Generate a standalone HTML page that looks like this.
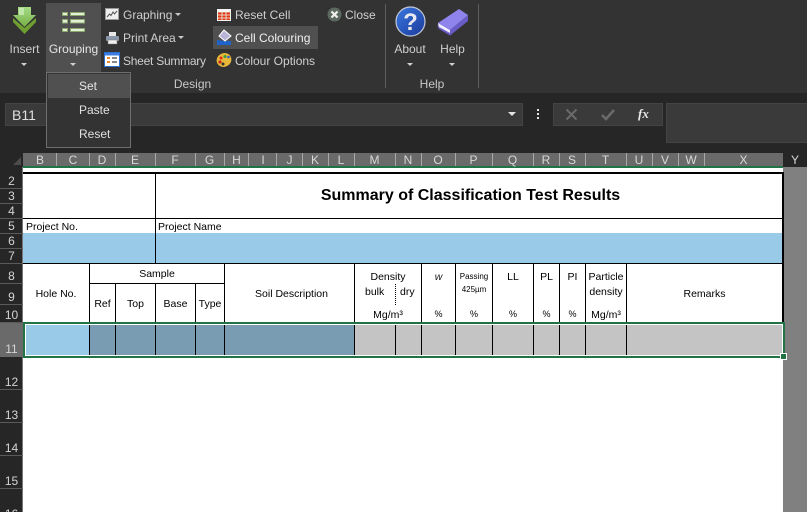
<!DOCTYPE html>
<html><head><meta charset="utf-8">
<style>
html,body{margin:0;padding:0;background:#262626;}
#p{position:relative;width:807px;height:512px;overflow:hidden;background:#262626;font-family:"Liberation Sans",sans-serif;}
#p div,#p svg{position:absolute;}
.t{color:#cfcfcf;font-size:12px;line-height:14px;white-space:nowrap;}
.c{text-align:center;}
.h{color:#d8d8d8;font-size:12px;line-height:14px;text-align:center;top:153px;height:13px;}
.hb{top:153px;height:13px;width:1px;background:#a8a8a8;}
.rn{color:#d4d4d4;font-size:12px;line-height:14px;width:23px;text-align:center;left:0;}
.rl{left:0;width:23px;height:1px;background:#5a5a5a;}
.k{background:#000;}
.x{color:#000;font-size:10.5px;line-height:12px;white-space:nowrap;text-align:center;}
.arr{width:0;height:0;border-left:3px solid transparent;border-right:3px solid transparent;border-top:3px solid #d0d0d0;}
</style></head><body><div id="p">
<!-- ribbon -->
<div style="left:0;top:0;width:807px;height:93px;background:#333"></div>
<div style="left:46px;top:3px;width:55px;height:70px;background:#505050"></div>
<div style="left:213px;top:26px;width:105px;height:23px;background:#505050"></div>
<div style="left:385px;top:4px;width:1px;height:84px;background:#5e5e5e"></div>
<div style="left:478px;top:4px;width:1px;height:84px;background:#5e5e5e"></div>

<!-- Insert icon -->
<svg style="left:13px;top:7px" width="23" height="28" viewBox="0 0 23 28">
<defs><linearGradient id="g1" x1="0" y1="0" x2="0" y2="1"><stop offset="0" stop-color="#a6dc88"/><stop offset="1" stop-color="#76b044"/></linearGradient></defs>
<path d="M0 11L11.500 21L23 11V15L11.500 27L0 15Z" fill="#6f9f30"/>
<path d="M5 0H18V8H23L11.500 20L0 8H5Z" fill="url(#g1)"/>
<path d="M6 1H11V8H6Z" fill="#cdeebc" opacity=".75"/>
</svg>
<div class="t c" style="left:0;top:42px;width:49px">Insert</div>
<div class="arr" style="left:21px;top:63px"></div>

<!-- Grouping icon -->
<svg style="left:61px;top:11px" width="25" height="22" viewBox="0 0 25 22" fill="#e4f0d6" stroke="#8aa86e" stroke-width="1">
<rect x="1.500" y="1.500" width="5" height="3"/><rect x="9.500" y="1.500" width="14" height="3"/>
<rect x="1.500" y="8.500" width="5" height="3.500"/><rect x="9.500" y="8.500" width="14" height="3.500"/>
<rect x="1.500" y="17.500" width="5" height="3"/><rect x="9.500" y="17.500" width="14" height="3"/>
</svg>
<div class="t c" style="left:46px;top:42px;width:55px;color:#e6e6e6">Grouping</div>
<div class="arr" style="left:70px;top:63px"></div>

<!-- Column 2 -->
<svg style="left:105px;top:8px" width="14" height="12" viewBox="0 0 14 12"><rect x=".5" y=".5" width="13" height="11" fill="#eee" stroke="#999"/><path d="M2 9L4.500 6L6 7.500L8 4L9.500 6L12 3" fill="none" stroke="#555" stroke-width="1"/></svg>
<div class="t" style="left:123px;top:8px">Graphing</div>
<div class="arr" style="left:175px;top:13px;border-top-color:#c8c8c8"></div>
<svg style="left:105px;top:31px" width="15" height="14" viewBox="0 0 15 14"><rect x="4" y="1" width="7" height="4" fill="#e8e8e8"/><rect x="1" y="5" width="13" height="5" rx="1" fill="#8a97a8"/><rect x="3" y="9" width="9" height="4" fill="#f0f0f0" stroke="#777" stroke-width=".5"/></svg>
<div class="t" style="left:123px;top:31px">Print Area</div>
<div class="arr" style="left:178px;top:36px;border-top-color:#c8c8c8"></div>
<svg style="left:104px;top:52px" width="16" height="15" viewBox="0 0 16 15"><rect x=".5" y=".5" width="15" height="14" fill="#fff" stroke="#2a6fd0"/><rect x="1" y="1" width="14" height="2.500" fill="#3a7fe0"/><rect x="3" y="5" width="3" height="2" fill="#e88a2a"/><rect x="8" y="5" width="5" height="2" fill="#888"/><rect x="3" y="9" width="3" height="2" fill="#e88a2a"/><rect x="8" y="9" width="5" height="2" fill="#888"/></svg>
<div class="t" style="left:123px;top:54px;letter-spacing:-.25px">Sheet Summary</div>

<!-- Column 3 -->
<svg style="left:217px;top:9px" width="14" height="12" viewBox="0 0 14 12"><rect x="0" y="0" width="14" height="12" fill="#f4f4f4"/><rect x="1" y="3" width="12" height="8" fill="#d93a10"/><path d="M5 0V12M9 0V12M0 3H14M0 6H14M0 9H14" stroke="#f4f4f4" stroke-width=".8"/></svg>
<div class="t" style="left:235px;top:8px">Reset Cell</div>
<svg style="left:216px;top:28px" width="17" height="18" viewBox="0 0 17 18"><path d="M1 12V17H15V13H8Z" fill="#1f62c8"/><path d="M8 2L15 8L9 13L3 8Z" fill="#b8b4d8" stroke="#fff"/></svg>
<div class="t" style="left:235px;top:31px;color:#f0f0f0">Cell Colouring</div>
<svg style="left:216px;top:52px" width="16" height="16" viewBox="0 0 16 16"><ellipse cx="8" cy="8" rx="7.500" ry="6.800" fill="#e8b838" transform="rotate(-25 8 8)"/><circle cx="5" cy="6" r="1.500" fill="#d93020"/><circle cx="9" cy="4.500" r="1.500" fill="#3a9a40"/><circle cx="12.500" cy="5" r="1.300" fill="#2a60d0"/><circle cx="4" cy="10" r="1.500" fill="#c02020"/><circle cx="7" cy="12" r="1.500" fill="#333"/></svg>
<div class="t" style="left:235px;top:54px">Colour Options</div>

<!-- Close -->
<svg style="left:327px;top:7px" width="15" height="15" viewBox="0 0 15 15"><circle cx="7.500" cy="7.500" r="7" fill="#5c6860"/><path d="M4.500 4.500L10.500 10.500M10.500 4.500L4.500 10.500" stroke="#f0f0f0" stroke-width="2.200"/></svg>
<div class="t" style="left:345px;top:8px">Close</div>

<!-- About -->
<svg style="left:395px;top:6px" width="31" height="31" viewBox="0 0 31 31"><defs><linearGradient id="g2" x1="0" y1="0" x2="1" y2="1"><stop offset="0" stop-color="#3a78e0"/><stop offset="1" stop-color="#1a3a9a"/></linearGradient></defs><circle cx="15.500" cy="15.500" r="14.500" fill="url(#g2)" stroke="#c4cad8" stroke-width="1.200"/><text x="15.500" y="24" font-family="Liberation Sans" font-weight="700" font-size="24" fill="#e8e8f0" text-anchor="middle">?</text></svg>
<div class="t c" style="left:386px;top:42px;width:48px">About</div>
<div class="arr" style="left:407px;top:63px"></div>

<!-- Help book -->
<svg style="left:437px;top:7px" width="32" height="29" viewBox="0 0 32 29"><path d="M1 16Q0 20 2 22L13 28.500L31 14V8L13 23Z" fill="#6a5cc8"/><path d="M1 16L13 23V26L2 20Z" fill="#f2f0ff"/><path d="M1 16L22 2L31 8L13 23Z" fill="#8f84ec"/></svg>
<div class="t c" style="left:430px;top:42px;width:45px">Help</div>
<div class="arr" style="left:449px;top:63px"></div>

<div class="t c" style="left:150px;top:77px;width:85px;color:#c8c8c8">Design</div>
<div class="t c" style="left:410px;top:77px;width:44px;color:#c8c8c8">Help</div>

<!-- formula bar -->
<div style="left:5px;top:103px;width:518px;height:23px;background:#3a3a3a;border:1px solid #444;box-sizing:border-box"></div>
<div style="left:12px;top:107px;color:#e0e0e0;font-size:14px;line-height:16px">B11</div>
<div style="left:508px;top:112px;width:0;height:0;border-left:4px solid transparent;border-right:4px solid transparent;border-top:4px solid #e4e4e4"></div>
<div style="left:537px;top:109px;width:2px;height:2px;background:#e4e4e4;box-shadow:0 4px 0 #e4e4e4,0 8px 0 #e4e4e4"></div>
<div style="left:553px;top:103px;width:110px;height:23px;background:#3a3a3a;border:1px solid #444;box-sizing:border-box"></div>
<svg style="left:565px;top:108px" width="13" height="13" viewBox="0 0 13 13"><path d="M1.500 1.500L11.500 11.500M11.500 1.500L1.500 11.500" stroke="#6a6a6a" stroke-width="2"/></svg>
<svg style="left:601px;top:108px" width="14" height="13" viewBox="0 0 14 13"><path d="M1 7L5 11L13 2" fill="none" stroke="#6a6a6a" stroke-width="2.500"/></svg>
<div style="left:638px;top:106px;color:#e8e8e8;font-family:'Liberation Serif',serif;font-style:italic;font-weight:700;font-size:13px;line-height:15px">fx</div>
<div style="left:666px;top:103px;width:141px;height:40px;background:#3a3a3a;border:1px solid #444;box-sizing:border-box;border-right:0"></div>

<!-- Dropdown -->
<div style="left:46px;top:72px;width:85px;height:76px;background:#333;border:1px solid #6e6e6e;box-sizing:border-box"></div>
<div style="left:48px;top:74px;width:82px;height:24px;background:#505050"></div>
<div class="t" style="left:79px;top:79px;color:#e6e6e6">Set</div>
<div class="t" style="left:79px;top:103px;color:#e0e0e0">Paste</div>
<div class="t" style="left:79px;top:127px;color:#e0e0e0">Reset</div>

<!-- sheet -->
<div style="left:23px;top:167px;width:761px;height:345px;background:#fff"></div>
<div style="left:783px;top:167px;width:24px;height:345px;background:#808080"></div>
<div style="left:0;top:153px;width:23px;height:359px;background:#262626"></div>
<div style="left:22px;top:167px;width:1px;height:345px;background:#777"></div>
<div style="left:13px;top:157px;width:0;height:0;border-left:8px solid transparent;border-bottom:8px solid #4c4c4c"></div>

<!-- col header -->
<div style="left:23px;top:153px;width:760px;height:13px;background:#6a6a6a"></div>
<div style="left:23px;top:166px;width:760px;height:2px;background:#217346"></div>
<div class="h" style="left:23px;width:34px">B</div><div class="h" style="left:57px;width:32px">C</div><div class="h" style="left:89px;width:26px">D</div><div class="h" style="left:115px;width:40px">E</div><div class="h" style="left:155px;width:40px">F</div><div class="h" style="left:195px;width:29px">G</div><div class="h" style="left:224px;width:25px">H</div><div class="h" style="left:249px;width:28px">I</div><div class="h" style="left:277px;width:25px">J</div><div class="h" style="left:302px;width:26px">K</div><div class="h" style="left:328px;width:26px">L</div><div class="h" style="left:354px;width:41px">M</div><div class="h" style="left:395px;width:26px">N</div><div class="h" style="left:421px;width:34px">O</div><div class="h" style="left:455px;width:37px">P</div><div class="h" style="left:492px;width:41px">Q</div><div class="h" style="left:533px;width:26px">R</div><div class="h" style="left:559px;width:26px">S</div><div class="h" style="left:585px;width:41px">T</div><div class="h" style="left:626px;width:26px">U</div><div class="h" style="left:652px;width:26px">V</div><div class="h" style="left:678px;width:26px">W</div><div class="h" style="left:704px;width:79px">X</div><div class="h" style="left:783px;width:24px">Y</div>
<div class="hb" style="left:56px"></div><div class="hb" style="left:89px"></div><div class="hb" style="left:115px"></div><div class="hb" style="left:155px"></div><div class="hb" style="left:195px"></div><div class="hb" style="left:224px"></div><div class="hb" style="left:248px"></div><div class="hb" style="left:276px"></div><div class="hb" style="left:302px"></div><div class="hb" style="left:328px"></div><div class="hb" style="left:354px"></div><div class="hb" style="left:395px"></div><div class="hb" style="left:421px"></div><div class="hb" style="left:455px"></div><div class="hb" style="left:492px"></div><div class="hb" style="left:533px"></div><div class="hb" style="left:559px"></div><div class="hb" style="left:585px"></div><div class="hb" style="left:626px"></div><div class="hb" style="left:652px"></div><div class="hb" style="left:678px"></div><div class="hb" style="left:704px"></div>

<!-- row numbers -->
<div class="rn" style="top:174px">2</div><div class="rl" style="top:188px"></div>
<div class="rn" style="top:189px">3</div><div class="rl" style="top:203px"></div>
<div class="rn" style="top:204px">4</div><div class="rl" style="top:218px"></div>
<div class="rn" style="top:219px">5</div><div class="rl" style="top:233px"></div>
<div class="rn" style="top:234px">6</div><div class="rl" style="top:248px"></div>
<div class="rn" style="top:249px">7</div><div class="rl" style="top:263px"></div>
<div class="rn" style="top:269px">8</div><div class="rl" style="top:283px"></div>
<div class="rn" style="top:290px">9</div><div class="rl" style="top:304px"></div>
<div class="rn" style="top:308px">10</div><div class="rl" style="top:322px"></div>
<div style="left:0;top:323px;width:23px;height:34px;background:#6a6a6a"></div>
<div class="rn" style="top:342px">11</div>
<div class="rn" style="top:375px">12</div><div class="rl" style="top:389px"></div>
<div class="rn" style="top:408px">13</div><div class="rl" style="top:422px"></div>
<div class="rn" style="top:441px">14</div><div class="rl" style="top:455px"></div>
<div class="rn" style="top:474px">15</div><div class="rl" style="top:488px"></div>
<div class="rn" style="top:507px">16</div>

<!-- fills -->
<div style="left:23px;top:233px;width:760px;height:30px;background:#99cbe8"></div>
<div style="left:90px;top:325px;width:265px;height:30px;background:#7a9cb2"></div>
<div style="left:25px;top:325px;width:65px;height:30px;background:#99cbe8"></div>
<div style="left:355px;top:325px;width:427px;height:30px;background:#c4c4c4"></div>

<!-- table borders -->
<div class="k" style="left:23px;top:172px;width:761px;height:2px"></div>
<div class="k" style="left:782px;top:172px;width:2px;height:152px"></div>
<div class="k" style="left:23px;top:218px;width:760px;height:1px"></div>
<div class="k" style="left:23px;top:263px;width:760px;height:1px"></div>
<div class="k" style="left:155px;top:172px;width:1px;height:92px"></div>
<div class="k" style="left:89px;top:283px;width:135px;height:1px"></div>
<div class="k" style="left:89px;top:264px;width:1px;height:91px"></div>
<div class="k" style="left:115px;top:283px;width:1px;height:72px"></div>
<div class="k" style="left:155px;top:283px;width:1px;height:72px"></div>
<div class="k" style="left:195px;top:283px;width:1px;height:72px"></div>
<div class="k" style="left:224px;top:264px;width:1px;height:91px"></div>
<div class="k" style="left:354px;top:264px;width:1px;height:91px"></div>
<div class="k" style="left:395px;top:325px;width:1px;height:30px"></div>
<div style="left:395px;top:284px;width:0;height:21px;border-left:1px dotted #000"></div>
<div class="k" style="left:421px;top:264px;width:1px;height:91px"></div>
<div class="k" style="left:455px;top:264px;width:1px;height:91px"></div>
<div class="k" style="left:492px;top:264px;width:1px;height:91px"></div>
<div class="k" style="left:533px;top:264px;width:1px;height:91px"></div>
<div class="k" style="left:559px;top:264px;width:1px;height:91px"></div>
<div class="k" style="left:585px;top:264px;width:1px;height:91px"></div>
<div class="k" style="left:626px;top:264px;width:1px;height:91px"></div>

<!-- selection -->
<div style="left:23px;top:322px;width:762px;height:36px;border:2px solid #217346;box-sizing:border-box"></div>
<div style="left:25px;top:324px;width:758px;height:32px;border:1px solid #fff;box-sizing:border-box"></div>
<div style="left:780px;top:353px;width:7px;height:7px;background:#217346;border:1px solid #fff;box-sizing:border-box"></div>

<!-- table text -->
<div style="left:157px;top:187px;width:627px;text-align:center;color:#000;font-weight:700;font-size:16px;line-height:18px;white-space:nowrap">Summary of Classification Test Results</div>
<div class="x" style="left:26px;top:221px">Project No.</div>
<div class="x" style="left:158px;top:221px">Project Name</div>
<div class="x" style="left:23px;top:288px;width:66px">Hole No.</div>
<div class="x" style="left:90px;top:268px;width:134px">Sample</div>
<div class="x" style="left:90px;top:298px;width:25px">Ref</div>
<div class="x" style="left:116px;top:298px;width:39px">Top</div>
<div class="x" style="left:156px;top:298px;width:39px">Base</div>
<div class="x" style="left:196px;top:298px;width:28px">Type</div>
<div class="x" style="left:225px;top:288px;width:133px">Soil Description</div>
<div class="x" style="left:355px;top:271px;width:66px">Density</div>
<div class="x" style="left:365px;top:286px">bulk</div>
<div class="x" style="left:400px;top:286px">dry</div>
<div class="x" style="left:355px;top:309px;width:66px">Mg/m³</div>
<div class="x" style="left:422px;top:271px;width:33px;font-style:italic;color:#1a1a1a">w</div>
<div class="x" style="left:456px;top:271px;width:36px;font-size:8px">Passing</div>
<div class="x" style="left:456px;top:284px;width:36px;font-size:8px">425µm</div>
<div class="x" style="left:493px;top:271px;width:40px">LL</div>
<div class="x" style="left:534px;top:271px;width:25px">PL</div>
<div class="x" style="left:560px;top:271px;width:25px">PI</div>
<div class="x" style="left:586px;top:271px;width:40px">Particle</div>
<div class="x" style="left:586px;top:286px;width:40px">density</div>
<div class="x" style="left:586px;top:309px;width:40px">Mg/m³</div>
<div class="x" style="left:422px;top:308px;width:33px;font-size:9px">%</div>
<div class="x" style="left:456px;top:308px;width:36px;font-size:9px">%</div>
<div class="x" style="left:493px;top:308px;width:40px;font-size:9px">%</div>
<div class="x" style="left:534px;top:308px;width:25px;font-size:9px">%</div>
<div class="x" style="left:560px;top:308px;width:25px;font-size:9px">%</div>
<div class="x" style="left:627px;top:288px;width:155px">Remarks</div>
</div></body></html>
